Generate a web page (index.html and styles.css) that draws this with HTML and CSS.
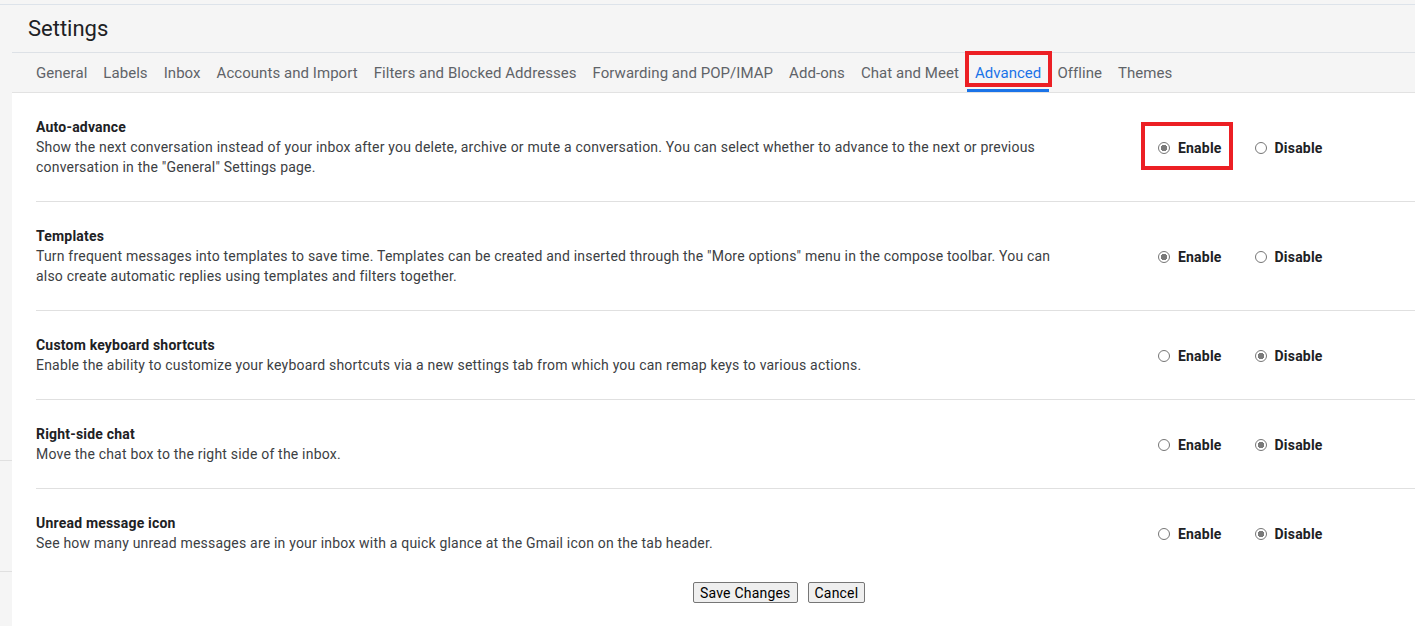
FILE: index.html
```html
<!DOCTYPE html>
<html>
<head>
    <title>Settings - Advanced</title>
    <link rel="stylesheet" href="styles.css">
</head>
<body>
    <div class="topline"></div>
    <div class="page">
        <div class="rail">
            <div class="rail-line first"></div>
            <div class="rail-line second"></div>
        </div>

        <div class="main">
            <div class="header">
                <h1>Settings</h1>
            </div>

            <div class="tabs">
                <a class="tab">General</a>
                <a class="tab">Labels</a>
                <a class="tab">Inbox</a>
                <a class="tab">Accounts and Import</a>
                <a class="tab">Filters and Blocked Addresses</a>
                <a class="tab">Forwarding and POP/IMAP</a>
                <a class="tab">Add-ons</a>
                <a class="tab">Chat and Meet</a>
                <a class="tab active">Advanced<span class="mark tab-mark"></span></a>
                <a class="tab">Offline</a>
                <a class="tab">Themes</a>
            </div>

            <div class="content">
                <div class="row">
                    <div class="info">
                        <div class="title">Auto-advance</div>
                        <div class="desc">Show the next conversation instead of your inbox after you delete, archive or mute a conversation. You can select whether to advance to the next or previous conversation in the "General" Settings page.</div>
                    </div>
                    <div class="options">
                        <label class="option"><input type="radio" name="aa" checked>Enable<span class="mark option-mark"></span></label>
                        <label class="option"><input type="radio" name="aa">Disable</label>
                    </div>
                </div>

                <div class="row">
                    <div class="info">
                        <div class="title">Templates</div>
                        <div class="desc">Turn frequent messages into templates to save time. Templates can be created and inserted through the "More options" menu in the compose toolbar. You can also create automatic replies using templates and filters together.</div>
                    </div>
                    <div class="options">
                        <label class="option"><input type="radio" name="tp" checked>Enable</label>
                        <label class="option"><input type="radio" name="tp">Disable</label>
                    </div>
                </div>

                <div class="row">
                    <div class="info">
                        <div class="title">Custom keyboard shortcuts</div>
                        <div class="desc">Enable the ability to customize your keyboard shortcuts via a new settings tab from which you can remap keys to various actions.</div>
                    </div>
                    <div class="options">
                        <label class="option"><input type="radio" name="ks">Enable</label>
                        <label class="option"><input type="radio" name="ks" checked>Disable</label>
                    </div>
                </div>

                <div class="row">
                    <div class="info">
                        <div class="title">Right-side chat</div>
                        <div class="desc">Move the chat box to the right side of the inbox.</div>
                    </div>
                    <div class="options">
                        <label class="option"><input type="radio" name="rc">Enable</label>
                        <label class="option"><input type="radio" name="rc" checked>Disable</label>
                    </div>
                </div>

                <div class="row last">
                    <div class="info">
                        <div class="title">Unread message icon</div>
                        <div class="desc">See how many unread messages are in your inbox with a quick glance at the Gmail icon on the tab header.</div>
                    </div>
                    <div class="options">
                        <label class="option"><input type="radio" name="um">Enable</label>
                        <label class="option"><input type="radio" name="um" checked>Disable</label>
                    </div>
                </div>

                <div class="actions">
                    <button>Save Changes</button>
                    <button>Cancel</button>
                </div>
            </div>
        </div>
    </div>
</body>
</html>
```

FILE: styles.css
```css
body {
    margin: 0;
    background-color: #f5f5f5;
    font-family: Roboto, "Liberation Sans", sans-serif;
    font-size: 14px;
    letter-spacing: 0.2px;
    color: #202124;
    overflow: hidden;
}
.topline {
    height: 4px;
    border-bottom: 1px solid #dde3ea;
}
.page {
    display: flex;
}
.rail {
    width: 12px;
    flex: 0 0 12px;
}
.rail-line {
    height: 1px;
    background-color: #e0e0e0;
}
.rail-line.first {
    margin-top: 455px;
}
.rail-line.second {
    margin-top: 110px;
}
.main {
    flex: 1;
    min-width: 0;
}
.header {
    height: 47px;
    display: flex;
    align-items: center;
    padding-left: 16px;
}
.header h1 {
    margin: 0;
    font-size: 22px;
    font-weight: 400;
    letter-spacing: 0;
    color: #202124;
}
.tabs {
    display: flex;
    height: 39px;
    padding-left: 16px;
    border-top: 1px solid #dde1e6;
    border-bottom: 1px solid #e2e2e2;
}
.tab {
    position: relative;
    display: flex;
    align-items: center;
    padding: 0 8px;
    font-size: 15px;
    letter-spacing: 0.05px;
    color: #5f6368;
    white-space: nowrap;
}
.tab.active {
    color: #1a73e8;
}
.tab.active::after {
    content: "";
    position: absolute;
    left: 0;
    right: 0;
    bottom: 0;
    height: 3px;
    background-color: #1a73e8;
}
.mark {
    position: absolute;
    border: 4px solid #ec1f24;
    box-sizing: border-box;
}
.tab-mark {
    left: -2px;
    right: -3px;
    top: -2px;
    height: 36px;
}
.content {
    background-color: white;
    padding-left: 24px;
    height: 533px;
}
.row {
    display: flex;
    align-items: center;
    padding: 24px 0;
    border-bottom: 1px solid #e0e0e0;
    line-height: 20px;
}
.row.last {
    border-bottom: none;
}
.info {
    flex: 0 0 1122px;
}
.title {
    font-weight: 700;
}
.desc {
    max-width: 1030px;
    color: #3c4043;
}
.options {
    display: flex;
    gap: 33px;
    padding-top: 1px;
}
.option {
    position: relative;
    display: flex;
    align-items: center;
    gap: 8px;
    font-weight: 700;
    color: #202124;
}
.option input {
    appearance: none;
    margin: 0;
    width: 12px;
    height: 12px;
    border: 1px solid #767676;
    border-radius: 50%;
    background: white;
    box-sizing: border-box;
}
.option input:checked {
    background: radial-gradient(circle, #7a7a7a 0 3px, white 3.5px);
}
.option-mark {
    left: -17px;
    right: -11px;
    top: -16px;
    bottom: -12px;
}
.actions {
    display: flex;
    gap: 10px;
    padding-left: 657px;
    margin-top: 5px;
}
button {
    font-family: Roboto, "Liberation Sans", sans-serif;
    font-size: 14px;
    letter-spacing: 0.2px;
    color: black;
    background-color: #efefef;
    border: 1px solid #767676;
    border-radius: 2px;
    padding: 0 6px;
    height: 21px;
}
```
